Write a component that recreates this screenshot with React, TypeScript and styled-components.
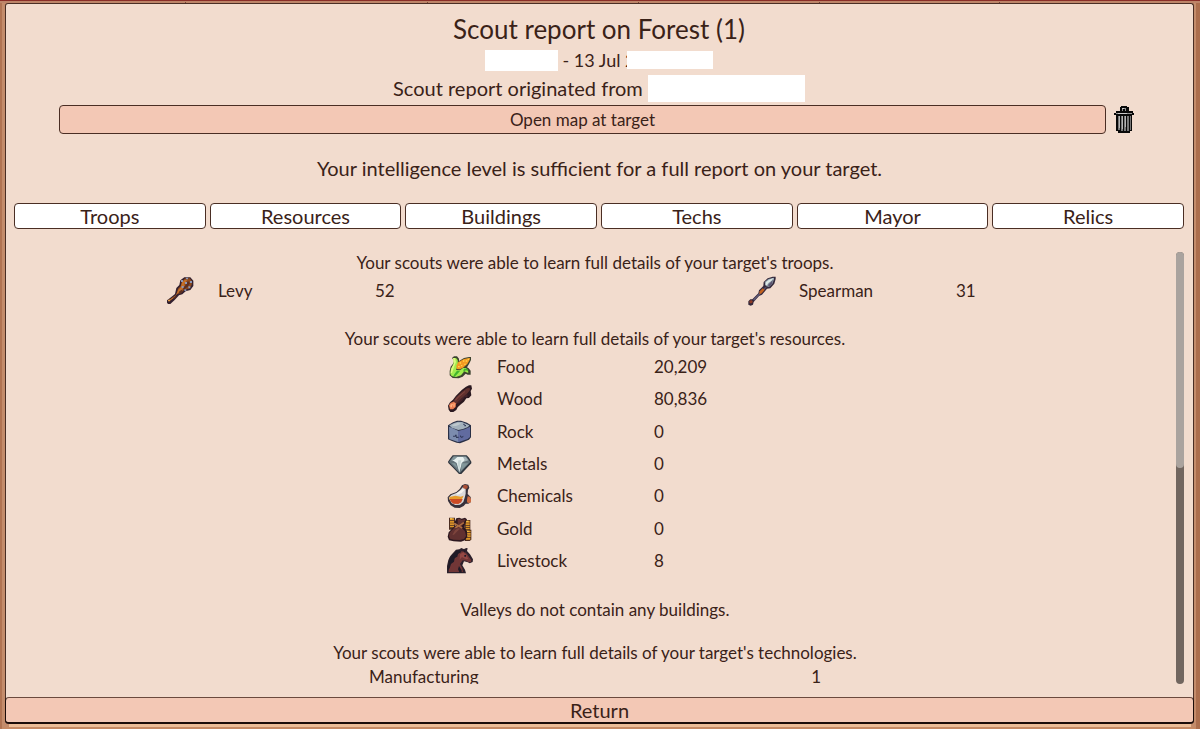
import React, { useEffect, useRef, useState } from 'react';
import styled, { createGlobalStyle } from 'styled-components';

const ink = '#3a2218';
const edge = '#4a2e24';
const parchment = '#f2dcce';
const blush = '#f3c8b5';

const GlobalStyle = createGlobalStyle`
  *, *::before, *::after { box-sizing: border-box; }
  body {
    margin: 0;
    color: ${ink};
    font-family: Lato, "Open Sans", sans-serif;
    font-size: 17px;
    line-height: 24px;
  }
  button { font-family: inherit; color: inherit; cursor: pointer; }
`;

const Frame = styled.div`
  height: 100vh;
  display: flex;
  padding: 3px 6px 5px 5px;
  background:
    linear-gradient(#8a2d27, #8a2d27) top / 100% 1px no-repeat,
    linear-gradient(#7a4638, #7a4638) 185px 2px / 1px 1px no-repeat,
    linear-gradient(#7a4638, #7a4638) 427px 2px / 1px 1px no-repeat,
    linear-gradient(#7a4638, #7a4638) 638px 2px / 1px 1px no-repeat,
    linear-gradient(#7a4638, #7a4638) 819px 2px / 1px 1px no-repeat,
    linear-gradient(#7a4638, #7a4638) 999px 2px / 1px 1px no-repeat,
    linear-gradient(#bd8468, #bd8468) top / 100% 3px no-repeat,
    linear-gradient(#b17453, #b17453) left / 2px 100% no-repeat,
    linear-gradient(#ac6e4d, #ac6e4d) right / 4px 100% no-repeat,
    linear-gradient(#c68a64, #c68a64) bottom / 100% 2px no-repeat,
    linear-gradient(#edbd97, #edbd97) 9px 100% / calc(100% - 18px) 5px no-repeat,
    #c48c6b;
`;

const Panel = styled.main`
  flex: 1;
  min-width: 0;
  display: flex;
  flex-direction: column;
  border: 1px solid ${edge};
  border-bottom: 0;
  border-radius: 3px 3px 4px 4px;
  background: ${parchment};
`;

const Header = styled.header`
  padding: 8px 54px 0 53px;
  text-align: center;
`;

const Title = styled.h1`
  margin: 0;
  font-size: 26px;
  font-weight: 400;
  line-height: 34px;
`;

const Line = styled.p<{ $size: number }>`
  display: flex;
  justify-content: center;
  align-items: center;
  height: 28px;
  margin: 0;
  font-size: ${p => p.$size}px;
  white-space: pre;
`;

const Redacted = styled.span<{ $w: number; $h: number }>`
  width: ${p => p.$w}px;
  height: ${p => p.$h}px;
  background: #fff;
`;

const YearEdge = styled.span`
  width: 2px;
  overflow: hidden;
`;

const ActionRow = styled.div`
  display: flex;
  gap: 8px;
  margin-top: 3px;
  padding-right: 5px;
`;

const Button = styled.button`
  height: 29px;
  padding: 0;
  border: 1px solid ${edge};
  border-radius: 4px;
  background: ${blush};
  font-size: 17px;
  line-height: 24px;
`;

const MapButton = styled(Button)`
  flex: 1;
`;

const TrashButton = styled.button`
  display: flex;
  padding: 0;
  border: 0;
  background: none;
`;

const Notice = styled.p`
  margin: 0;
  padding: 20px 0 21px;
  font-size: 20px;
  line-height: 28px;
  text-align: center;
`;

const Tabs = styled.nav`
  display: grid;
  grid-template-columns: repeat(6, 1fr);
  gap: 4px;
  padding: 0 9px 0 8px;
`;

const Tab = styled(Button)`
  height: 26px;
  background: #fff;
  font-size: 20px;
`;

const ReportArea = styled.div`
  flex: 1;
  min-height: 0;
  display: flex;
  margin: 22px 9px 13px 8px;
`;

const Report = styled.div`
  flex: 1;
  min-width: 0;
  overflow-y: auto;
  scrollbar-width: none;
`;

const Track = styled.div`
  width: 8px;
  margin-top: 1px;
  border-radius: 4px;
  background: #71665f;
`;

const Thumb = styled.div`
  height: 50%;
  border-radius: 4px;
  background: #aaa39e;
`;

const Section = styled.section`
  margin-bottom: 19px;
  text-align: center;
`;

const Intro = styled.p`
  margin: 0;
`;

const TroopGrid = styled.div`
  display: grid;
  grid-template-columns: 1fr 1fr;
  padding-bottom: 1px;
`;

const DataTable = styled.table<{ $w: number; $h: number }>`
  width: ${p => p.$w}px;
  height: ${p => p.$h}px;
  margin: 0 auto;
  table-layout: fixed;
  border-collapse: collapse;
  text-align: left;
  th, td { padding: 0; font-weight: 400; }
  svg { display: block; }
`;

const ResourceBlock = styled.div`
  padding-bottom: 2px;
`;

const IconCell = styled.td`
  width: 54px;
`;

const NameCell = styled.th`
  width: 157px;
`;

const TechTable = styled.table`
  width: 452px;
  margin: 0 auto;
  border-collapse: collapse;
  th, td { padding: 0; font-weight: 400; text-align: left; }
  td { text-align: right; }
`;

const ReturnButton = styled(Button)`
  height: 27px;
  margin: 0 -1px;
  padding-bottom: 1px;
  border-color: #6b4a3e #1c0c08 #1c0c08;
  border-bottom-width: 2px;
  font-size: 20px;
`;

type ArtProps = { box: string; w?: number; h?: number; crisp?: boolean; children: React.ReactNode };
const Art = ({ box, w = 32, h = 32, crisp, children }: ArtProps) => (
  <svg width={w} height={h} viewBox={box} shapeRendering={crisp ? 'crispEdges' : 'auto'} aria-hidden="true">{children}</svg>
);

const Club = () => (
  <Art box="39 30 96 96">
    <path fill="#33202f" d="M48 106l12-9 12-10 4-18 9-9 3-14 12-9h18l9 10v16l-9 12-14 4-10 9-10 3-13 14-13 12h-7l-3-4z" />
    <path fill="#8f4a1d" d="M51 107l12-8 13-10 5-18 8-8 4-14 10-9h13l7 9-1 11-8 11-13 2-11 11-11 3-13 13-10 7z" />
    <path fill="#c46f28" d="M54 106l21-16 7-16 8-8 3-15 9-7 7 1-9 12 2 8-14 14-7 5-16 17-8 6z" />
    <path fill="#5c2f22" d="M96 68l9-9 6-11 6 7-7 10-12 9zM84 80l8-6 3 6-9 8zM66 99l9-7 2 3-9 8z" />
    <path fill="#8d98b8" d="M90 45h6v6h-6zM102 51h6v6h-6zM117 48h6v6h-6zM112 64h6v6h-6zM92 63h6v6h-6zM105 38h6v5h-6zM100 73h6v5h-6z" />
    <path fill="#e49a42" d="M51 104h6v5h-6z" />
  </Art>
);

const Spear = () => (
  <Art box="33 30 96 96">
    <path fill="#34283b" d="M43 109l6-6h6l18-18 2-9 13-13 1-12 12-11 15-5h9v7l-4 14-12 14-10 1-15 18-9 4-16 18-2 8-7 3-7-3z" />
    <path fill="#5c5571" d="M57 103l20-20 14-15 8-3-17 20-21 22z" />
    <path fill="#c4621e" d="M77 79l9-9 6 4-9 11-7 3z" />
    <path fill="#8e3d28" d="M46 108l6-3 5 5-4 5h-6z" />
    <path fill="#8e9da8" d="M92 51l11-9 17-4v5l-5 13-10 10-10-3z" />
    <path fill="#dce8e6" d="M96 51l9-7 14-5-7 9-9 6-4 7-5-2z" />
    <path fill="#5c5571" d="M102 60l14-15-2 12-9 8z" />
  </Art>
);

const Corn = () => (
  <Art box="24 15 96 96">
    <path fill="#3d4430" d="M51 36l6-5h9l6 7v7l15-9 15-3h6v9l-6 12-6 10 5 3 6 7v12h-9l-6-3-9 9-12 5-18-1-9-8v-13l3-13 7-9 3-9z" />
    <path fill="#a1ec4d" d="M54 36h9l5 6 1 14-6 16 12 1 9-7h9l6 7 1 8-6-2-6-3-10 12-15 5-13-3-4-6 1-13 9-16 1-12z" />
    <path fill="#f49a22" d="M70 48l17-9 15-3h3l-1 6-7 12-11 10-11 6-10-1-1-10z" />
    <path fill="#ffd248" d="M74 49h4v4h-4zM84 43h4v4h-4zM92 43h5v4h-5zM78 57h4v4h-4zM88 53h4v4h-4zM69 60h5v4h-5zM98 38h4v4h-4z" />
    <path fill="#dcfb7d" d="M54 36h6l3 12-6 15-6 18h-4l2-14 7-14z" />
    <path fill="#42b52e" d="M66 74l9 1-8 9-8 8h-5l5-9zM87 68h9l5 8-8-3-9 4z" />
  </Art>
);

const Log = () => (
  <Art box="24 114 96 96">
    <path fill="#2b1920" d="M39 182l6-10 9-8 9-12 9-9 9-9 12-9 9-4h7l2 10-4 7 2 13-7 8-8 1-7 10-11 9-8 8-4 8-9 6h-9l-5-7z" />
    <path fill="#60312e" d="M54 170l9-13 18-17 15-10 8-1 1 6-10 13-16 13-14 16z" />
    <path fill="#43232a" d="M67 172l12-11 16-14 3 2-1 8-8-1-8 11-12 9z" />
    <path fill="#824640" d="M60 164l12-12 18-14v3l-18 15-10 11z" />
    <path fill="#e97c51" d="M42 181l5-8 9-3 7 5-1 11-8 7h-9z" />
    <path fill="#ffb17f" d="M48 178h6v3h-3v6h-5v-6zM56 175h3v10h-4v-4z" />
  </Art>
);

const Rock = () => (
  <Art box="24 213 96 96">
    <path fill="#292f45" d="M39 241l15-9 12-5h12l18 6 12 8v36l-6 7-15 6-12 5-10-2-14-5-12-5z" />
    <path fill="#a3b1bc" d="M43 241l14-7 12-4 12 1 22 10-4 5-15 6-14 3-20-7z" />
    <path fill="#7c8cae" d="M42 245l10 4 17 8v34l-17-6-9-3z" />
    <path fill="#616b9f" d="M69 258l20-5 16-8v31l-7 6-26 9h-3z" />
    <path fill="#bec8cd" d="M51 240l15-6 12 1-6 4-9 4h-9z" />
    <path fill="#333b5b" d="M85 236h4v4h4v4h-5v-4h-3zM54 272h6v-3h5v6h6v4h-8v-4h-9zM75 270l5 5 5-3v4l-5 3-5-4z" />
  </Art>
);

const Diamond = () => (
  <Art box="309 609 96 96">
    <path fill="#2d343d" d="M324 650l8-12 6-7h42l7 7 7 12v5l-14 15-16 17h-7l-17-18-15-15z" />
    <path fill="#65747b" d="M327 651l12-17h40l12 17-32 34z" />
    <path fill="#a5b4b8" d="M334 646l8-11h35l8 11-24 8z" />
    <path fill="#e6efee" d="M349 636h20l5 9-8 8-8 29-8-28-12-8z" />
    <path fill="#82979b" d="M342 635l10 1-10 9h-7zM365 655h20l-22 22zM346 655l8 17-19-18z" />
    <path fill="#c7d5d5" d="M355 646h9l-3 10-3 22-5-21z" />
  </Art>
);

const Flask = () => (
  <Art box="24 48 96 96">
    <path fill="#37303a" d="M38 100l8-9 18-7 10-9 7-11 9-4 10 2 3 9-4 7-1 12 9 9 1 15-8 5h-8l-6 7-12 6-15-1-12-7-8-13z" />
    <path fill="#dbdada" d="M41 101l8-8 17-7 10-8 8-9 8 5v15l-3 12-4 13-10 8-14 1-11-5z" />
    <path fill="#e89c2b" d="M43 99l18-4 16 3 9-3-5 10-37 3z" />
    <path fill="#cc4b25" d="M44 105h39l-4 10-9 5-15-1-7-6z" />
    <path fill="#aa5036" d="M85 64l6-2 7 3v6l-5 5-9-4z" />
    <path fill="#cd6b42" d="M98 97l6 1 4 7v9l-6 4-6-3v-8z" />
    <path fill="#f7f4ef" d="M75 81l9-6 4 3-8 9-12 5-5-3z" />
  </Art>
);

const GoldBag = () => (
  <Art box="24 144 96 96">
    <path fill="#4a2c20" d="M42 158h18v36H42zM88 165h18v34H88zM90 194h19v30l-5 4H90z" />
    <path fill="#db9428" d="M45 160h12v6H45zM45 168h12v5H45zM45 175h12v5H45zM45 182h12v5H45zM92 167h12v6H92zM92 175h12v5H92zM92 182h12v5H92zM92 189h12v4H92zM92 197h15v5H92zM92 204h15v5H92zM92 211h15v5H92zM92 218h14v6H92z" />
    <path fill="#ffcf50" d="M45 160h7v3h-7zM92 167h8v3h-8zM92 197h9v3h-9zM92 211h6v3h-6z" />
    <path fill="#2c171f" d="M64 160l9-2 7 3 10-3 6 5-6 15-2 9 8 12 1 16-7 11-12 4-22-1-14-3-4-11 3-13 13-14 9-8-4-9z" />
    <path fill="#613130" d="M68 162l6-1 6 4 10-3 1 3-9 15-2 8 10 11 3 14-6 9-12 3-19-1-11-3-3-8 3-11 12-13 11-7z" />
    <path fill="#b06f42" d="M56 173l9 3 6 5 14-10 3 4-13 8 8 4-3 4-9-6-8 5-5-3 8-5-10-4z" />
    <path fill="#7d443c" d="M60 196l9-6 6 1-8 8-10 10h-5z" />
  </Art>
);

const Horse = () => (
  <Art box="24 243 96 96">
    <path fill="#2c202b" d="M36 328v-22l4-18 6-12 8-9 9-10 10-1 6-4 7 3 4-1 3-2 5 1-2 8 9 10 9 15-1 8-9 4-5-3-12-3-5 12 8 13 3 11z" />
    <path fill="#713636" d="M41 324l3-20 8-12 9-12 10-12 9-6 9 1 7 7 6 9 7 9-1 6-8 1-6-5-11-1-8 11 7 13 2 11z" />
    <path fill="#944844" d="M75 271l10-6 8 7 7 13-7 1-12-7-7 8z" />
    <path fill="#1f1a26" d="M44 281l10-9 9-12 10-2 5 7-9 4-2 9-8 4-2 11-9 7-4 13-6 4zM88 273h5v5h-5zM85 257l6 4-3 5zM72 306l8 13v7h-6l-5-10z" />
  </Art>
);

const Trash = () => (
  <Art box="42 30 60 87" w={20} h={29} crisp>
    <path fill="#090909" d="M60 36h3v-3h18v3h6v12h12v6h3v6h-6v48h-6v6H54v-6h-6V60h-6v-6h6v-6h12z" />
    <path fill="#929292" d="M66 39h12v9h-3v-6h-6v6h-3zM48 54h48v3H48z" />
    <path fill="#c9c9c9" d="M54 54h27v3H54zM66 39h6v3h-6z" />
    <path fill="#787878" d="M54 63h6v42h-6zM63 63h6v45h-6zM72 63h6v45h-6zM81 63h6v45h-6zM90 63h3v42h-3z" />
    <path fill="#b5b5b5" d="M57 63h3v36h-3zM66 63h3v39h-3zM75 63h3v33h-3z" />
  </Art>
);

const tabs = ['Troops', 'Resources', 'Buildings', 'Techs', 'Mayor', 'Relics'];

const troops = [
  { name: 'Levy', count: '52', icon: <Club /> },
  { name: 'Spearman', count: '31', icon: <Spear /> },
];

const resources = [
  { name: 'Food', count: '20,209', icon: <Corn /> },
  { name: 'Wood', count: '80,836', icon: <Log /> },
  { name: 'Rock', count: '0', icon: <Rock /> },
  { name: 'Metals', count: '0', icon: <Diamond /> },
  { name: 'Chemicals', count: '0', icon: <Flask /> },
  { name: 'Gold', count: '0', icon: <GoldBag /> },
  { name: 'Livestock', count: '8', icon: <Horse /> },
];

type Item = { name: string; count: string; icon: React.ReactNode };
const ItemTable = ({ items, w, h }: { items: Item[]; w: number; h: number }) => (
  <DataTable $w={w} $h={h}>
    <tbody>
      {items.map(item => (
        <tr key={item.name}>
          <IconCell>{item.icon}</IconCell>
          <NameCell scope="row">{item.name}</NameCell>
          <td>{item.count}</td>
        </tr>
      ))}
    </tbody>
  </DataTable>
);

export default function App() {
  const report = useRef<HTMLDivElement>(null);
  const track = useRef<HTMLDivElement>(null);
  const [shift, setShift] = useState(0);

  useEffect(() => {
    const el = report.current;
    if (!el) return;
    const onScroll = () => {
      const range = el.scrollHeight - el.clientHeight;
      const room = (track.current?.clientHeight ?? 0) / 2;
      setShift(range > 0 ? (el.scrollTop / range) * room : 0);
    };
    el.addEventListener('scroll', onScroll);
    return () => el.removeEventListener('scroll', onScroll);
  }, []);

  return (
    <>
      <GlobalStyle />
      <Frame>
        <Panel>
          <Header>
            <Title>Scout report on Forest (1)</Title>
            <Line $size={18}>
              <Redacted $w={73} $h={21} />
              <span> - 13 Jul </span>
              <YearEdge>2</YearEdge>
              <Redacted $w={86} $h={18} />
            </Line>
            <Line $size={20}>
              <span>Scout report originated from </span>
              <Redacted $w={157} $h={27} />
            </Line>
            <ActionRow>
              <MapButton type="button">Open map at target</MapButton>
              <TrashButton type="button" aria-label="Delete report"><Trash /></TrashButton>
            </ActionRow>
          </Header>
          <Notice>Your intelligence level is sufficient for a full report on your target.</Notice>
          <Tabs>
            {tabs.map(tab => <Tab type="button" key={tab}>{tab}</Tab>)}
          </Tabs>
          <ReportArea>
            <Report ref={report}>
              <Section>
                <Intro>Your scouts were able to learn full details of your target's troops.</Intro>
                <TroopGrid>
                  {troops.map(t => <ItemTable key={t.name} items={[t]} w={281} h={32} />)}
                </TroopGrid>
              </Section>
              <Section>
                <Intro>Your scouts were able to learn full details of your target's resources.</Intro>
                <ResourceBlock>
                  <ItemTable items={resources} w={304} h={226} />
                </ResourceBlock>
              </Section>
              <Section>
                <Intro>Valleys do not contain any buildings.</Intro>
              </Section>
              <Section>
                <Intro>Your scouts were able to learn full details of your target's technologies.</Intro>
                <TechTable>
                  <tbody>
                    <tr><th scope="row">Manufacturing</th><td>1</td></tr>
                  </tbody>
                </TechTable>
              </Section>
            </Report>
            <Track ref={track}>
              <Thumb style={{ transform: `translateY(${shift}px)` }} />
            </Track>
          </ReportArea>
          <ReturnButton type="button">Return</ReturnButton>
        </Panel>
      </Frame>
    </>
  );
}
